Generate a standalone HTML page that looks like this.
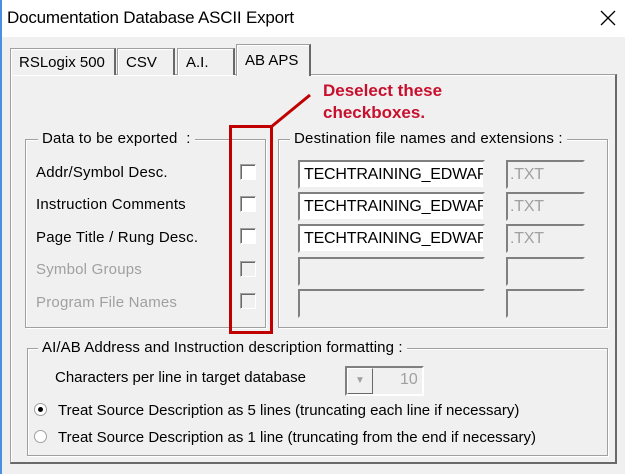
<!DOCTYPE html>
<html><head><style>
*{margin:0;padding:0;box-sizing:border-box}
body{width:625px;height:474px;background:#f0f0f0;font-family:"Liberation Sans",Arial,sans-serif;position:relative;overflow:hidden;color:#000}
.a{position:absolute}
.t{font-size:15px;white-space:nowrap;letter-spacing:0.2px}
.g{color:#a0a0a0}
.grp{position:absolute;border:1px solid #a0a0a0;box-shadow:1px 1px 0 #fff inset, 1px 1px 0 #fff}
.lbl{position:absolute;background:#f0f0f0;padding:0 4px;font-size:15px;white-space:nowrap;letter-spacing:0.2px}
.cb{position:absolute;width:16px;height:16px;background:#fff;border:1px solid;border-color:#a0a0a0 #fff #fff #a0a0a0;box-shadow:inset 1px 1px 0 #696969}
.cb.d{background:#f0f0f0}
.tb{position:absolute;height:29px;border:2px solid;border-color:#808080 #f0f0f0 #f0f0f0 #808080;background:#fff;font-size:16px;padding:4px 0 0 4px;overflow:hidden;white-space:nowrap;letter-spacing:-0.2px}
.tb.d{background:#f0f0f0;color:#a0a0a0}
.tab{position:absolute;top:48px;height:27px;border:1px solid #a0a0a0;border-bottom:none;background:#f0f0f0;font-size:15px;padding:5px 0 0 8px;box-shadow:inset 1px 1px 0 #fff;border-right:2px solid #696969}
</style></head><body>
<div class="a" style="left:0;top:0;width:625px;height:37px;background:#fff"></div>
<div class="a" style="left:0;top:0;width:2px;height:474px;background:#4a90e0"></div>
<div class="a t" style="left:7px;top:8px;font-size:17px;letter-spacing:-0.2px">Documentation Database ASCII Export</div>
<svg class="a" style="left:600px;top:10px" width="16" height="16"><path d="M1 1L15 15M15 1L1 15" stroke="#000" stroke-width="1.3"/></svg>
<div class="a" style="left:10px;top:74px;width:607px;height:390px;border:1px solid #a0a0a0;border-right:2px solid #696969;border-bottom:2px solid #696969;box-shadow:inset 1px 1px 0 #fff"></div>
<div class="tab" style="left:10px;width:106px">RSLogix 500</div>
<div class="tab" style="left:117px;width:58px">CSV</div>
<div class="tab" style="left:177px;width:58px">A.I.</div>
<div class="tab" style="left:236px;top:44px;height:32px;width:75px;padding-top:7px;border-bottom:none">AB APS</div>
<div class="grp" style="left:25px;top:139px;width:241px;height:189px"></div>
<div class="lbl" style="left:38px;top:130px">Data to be exported&nbsp; :</div>
<div class="grp" style="left:278px;top:139px;width:330px;height:189px"></div>
<div class="lbl" style="left:290px;top:130px">Destination file names and extensions :</div>
<div class="t a" style="left:36px;top:164px">Addr/Symbol Desc.</div>
<div class="t a" style="left:36px;top:196px">Instruction Comments</div>
<div class="t a" style="left:36px;top:229px">Page Title / Rung Desc.</div>
<div class="t a g" style="left:36px;top:261px">Symbol Groups</div>
<div class="t a g" style="left:36px;top:294px">Program File Names</div>
<div class="cb" style="left:240px;top:164px"></div>
<div class="cb" style="left:240px;top:196px"></div>
<div class="cb" style="left:240px;top:228px"></div>
<div class="cb d" style="left:240px;top:261px"></div>
<div class="cb d" style="left:240px;top:293px"></div>
<div class="tb" style="left:298px;top:160px;width:187px">TECHTRAINING_EDWAR</div>
<div class="tb" style="left:298px;top:192px;width:187px">TECHTRAINING_EDWAR</div>
<div class="tb" style="left:298px;top:224px;width:187px">TECHTRAINING_EDWAR</div>
<div class="tb d" style="left:298px;top:257px;width:187px"></div>
<div class="tb d" style="left:298px;top:289px;width:187px"></div>
<div class="tb d" style="left:506px;top:160px;width:79px;padding-left:2px">.TXT</div>
<div class="tb d" style="left:506px;top:192px;width:79px;padding-left:2px">.TXT</div>
<div class="tb d" style="left:506px;top:224px;width:79px;padding-left:2px">.TXT</div>
<div class="tb d" style="left:506px;top:257px;width:79px"></div>
<div class="tb d" style="left:506px;top:289px;width:79px"></div>
<div class="a" style="left:229px;top:125px;width:44px;height:209px;border:3px solid #c00000"></div>
<svg class="a" style="left:0;top:0" width="625" height="474"><line x1="271" y1="127" x2="310" y2="95" stroke="#c00000" stroke-width="3"/></svg>
<div class="a" style="left:323px;top:80px;color:#c8102e;font-weight:bold;font-size:17px;line-height:22px">Deselect these<br>checkboxes.</div>
<div class="grp" style="left:27px;top:348px;width:581px;height:108px"></div>
<div class="lbl" style="left:38px;top:339px;letter-spacing:0.1px">AI/AB Address and Instruction description formatting :</div>
<div class="t a" style="left:55px;top:369px;letter-spacing:0">Characters per line in target database</div>
<div class="a" style="left:345px;top:366px;width:79px;height:30px;background:#f0f0f0;border:2px solid;border-color:#808080 #fff #fff #808080"></div>
<div class="a" style="left:347px;top:368px;width:26px;height:26px;border:1px solid;border-color:#fff #696969 #696969 #fff;color:#a0a0a0;font-size:10px;text-align:center;line-height:24px">▼</div>
<div class="a g" style="left:400px;top:371px;font-size:16px">10</div>
<div class="a" style="left:34px;top:403px;width:13px;height:13px;border-radius:50%;background:#fff;border:1px solid #a0a0a0"></div>
<div class="a" style="left:38px;top:407px;width:5px;height:5px;border-radius:50%;background:#000"></div>
<div class="t a" style="left:58px;top:402px;letter-spacing:0">Treat Source Description as 5 lines (truncating each line if necessary)</div>
<div class="a" style="left:34px;top:430px;width:13px;height:13px;border-radius:50%;background:#fff;border:1px solid #a0a0a0"></div>
<div class="t a" style="left:58px;top:429px;letter-spacing:0">Treat Source Description as 1 line (truncating from the end if necessary)</div>
</body></html>
